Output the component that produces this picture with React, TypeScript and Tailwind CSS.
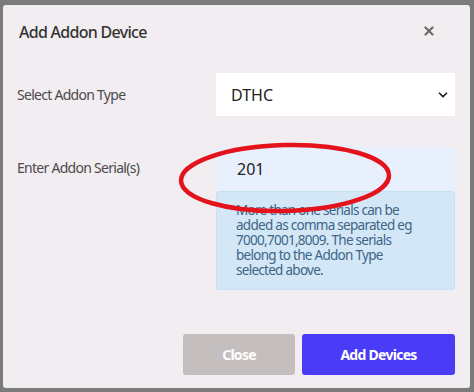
import { ChevronDown, X } from "lucide-react";

export default function App() {
  return (
    <div
      className="h-[392px] w-[474px] bg-[#7c7b7c] pl-[3px] pr-[4px] pt-[5px] pb-[4px] tracking-[-0.045em]"
      style={{ fontFamily: '"Noto Sans", sans-serif' }}
    >
      <div className="relative flex h-full flex-col rounded-[3px] bg-[#f1edf1] pl-[14px] pr-[15px]">
        <div className="flex items-start justify-between pt-[15px]">
          <h2 className="pl-[2px] text-[16px] font-medium leading-6 text-[#333]">
            Add Addon Device
          </h2>
          <X className="mr-[19px] mt-[4px] h-[14px] w-[14px] text-[#6a6a6a]" strokeWidth={3.75} />
        </div>

        <div className="mt-[29px] flex items-center">
          <label className="w-[199px] text-[14px] text-[#4b4a4c]">Select Addon Type</label>
          <div className="flex h-[43px] w-[239px] items-center justify-between bg-white pl-[15px] pr-[5px]">
            <span className="text-[16px] tracking-normal text-[#222]">DTHC</span>
            <ChevronDown className="h-[14px] w-[14px] text-[#222]" strokeWidth={3} />
          </div>
        </div>

        <div className="mt-[31px] flex items-start">
          <label className="w-[199px] pt-[10px] text-[14px] text-[#4b4a4c]">Enter Addon Serial(s)</label>
          <div className="flex w-[239px] flex-col">
            <div className="flex h-[44px] items-center bg-[#e8f0fe] pl-[21px] text-[16px] tracking-normal text-[#222]">201</div>
            <div className="h-[99px] rounded-[3px] border border-[#c6e0f4] bg-[#d3e7f7] pl-[19px] pr-[8px] pt-[11px] text-[13.5px] leading-[15px] text-[#3e6585]">
              More than one serials can be
              <br />
              added as comma separated eg
              <br />
              7000,7001,8009. The serials
              <br />
              belong to the Addon Type
              <br />
              selected above.
            </div>
          </div>
        </div>

        <div className="mt-auto mb-[13px] flex justify-end gap-[7px]">
          <button className="h-[41px] w-[112px] rounded-[3px] bg-[#c5bebe] text-[14px] font-bold text-white">
            Close
          </button>
          <button className="h-[41px] w-[153px] rounded-[3px] bg-[#4a3bf6] text-[14px] font-bold text-white">
            Add Devices
          </button>
        </div>

        <svg
          className="pointer-events-none absolute left-[172px] top-[135px]"
          width="224"
          height="80"
          viewBox="0 0 224 80"
        >
          <ellipse
            cx="110"
            cy="38"
            rx="104"
            ry="33"
            transform="rotate(-1.5 110 38)"
            fill="none"
            stroke="#e3121b"
            strokeWidth="4.5"
          />
        </svg>
      </div>
    </div>
  );
}
